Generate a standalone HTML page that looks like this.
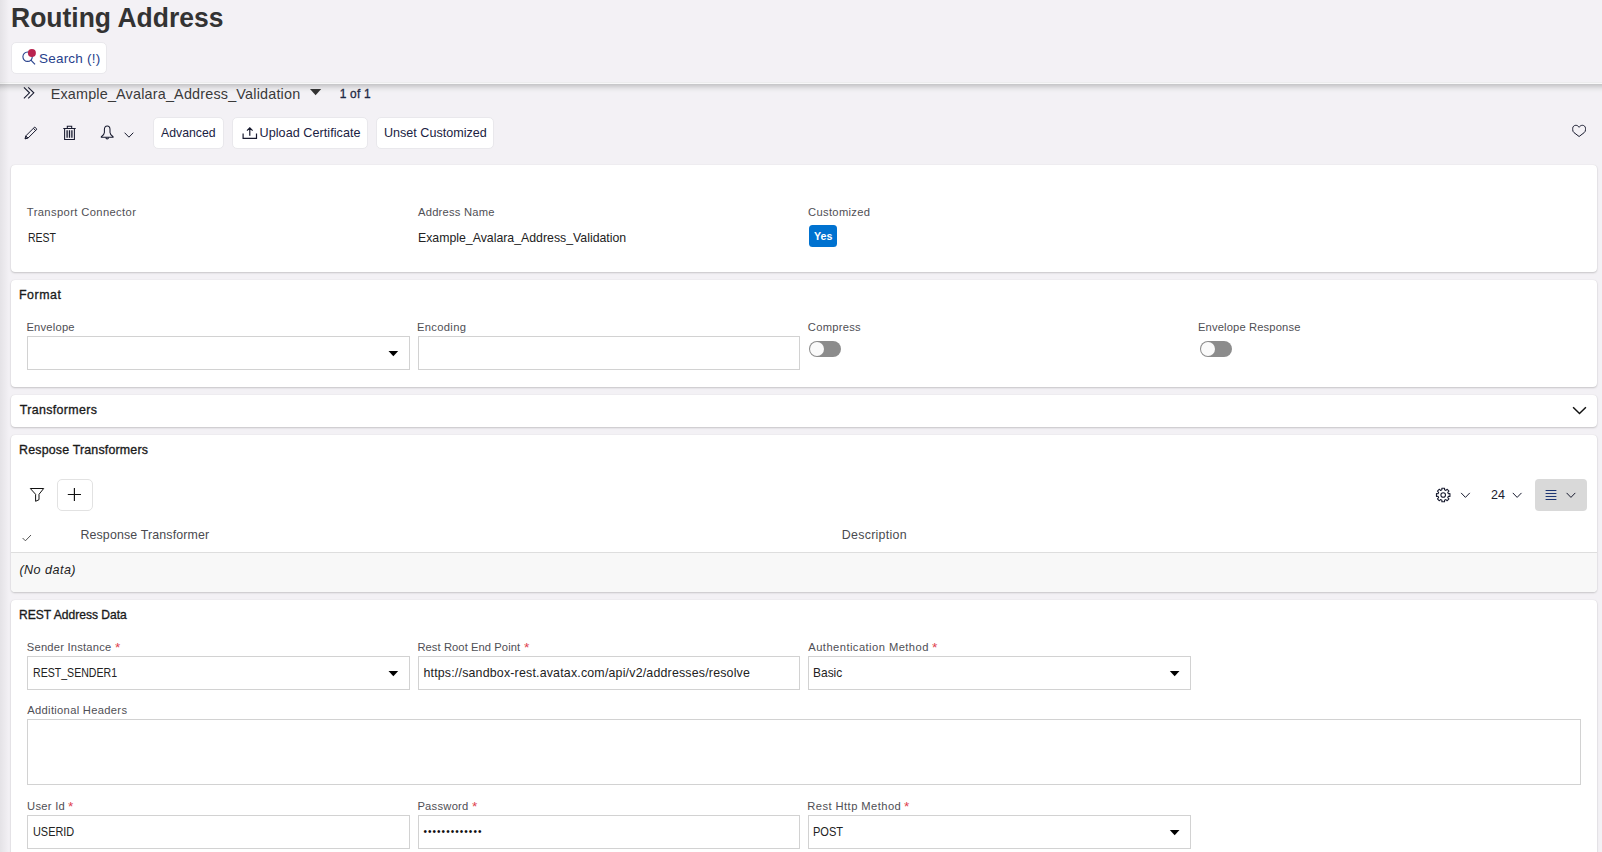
<!DOCTYPE html>
<html lang="en">
<head>
<meta charset="utf-8">
<title>Routing Address</title>
<style>
*{box-sizing:border-box;margin:0;padding:0}
html,body{width:1602px;height:852px;overflow:hidden}
body{background:#f3f1f5;font-family:"Liberation Sans",sans-serif;position:relative;color:#222}
.abs{position:absolute}
.t{position:absolute;white-space:nowrap;line-height:1;transform-origin:0 0;font-family:"Liberation Sans",sans-serif}
.edge{left:0;top:0;width:9px;height:852px;background:linear-gradient(to right,rgba(20,20,25,.065),rgba(20,20,25,.03) 55%,rgba(20,20,25,0))}
.hdr{left:0;top:0;width:1602px;height:84px;background:#f3f1f5;border-bottom:1px solid #f8f8f9}
.hdr:before{content:"";position:absolute;left:0;top:82px;width:100%;height:1px;background:#ececed}
.hshadow{left:0;top:84px;width:1602px;height:9px;background:linear-gradient(#c8c8ca 0 1px,#cfced1 1px 2px,#d6d5d8 2px 3px,#dddcdf 3px 4px,#e4e3e6 4px 5px,#e9e8eb 5px 6px,#edecef 6px 7px,#f0eff2 7px 8px,#f2f0f4 8px 9px)}
.btn{position:absolute;background:#fff;border:1px solid #e9e8ec;border-radius:5px}
.card{position:absolute;left:11px;width:1586px;background:#fff;border-radius:4px;box-shadow:0 1px 2px rgba(0,0,0,.18),0 0 1px rgba(0,0,0,.12)}
.inp{position:absolute;height:34px;width:382.5px;background:#fff;border:1px solid #d2d2d2}
.tog{position:absolute;width:32px;height:16px;border-radius:8px;background:#8c8c8c}
.tog i{position:absolute;left:1px;top:1px;width:14px;height:14px;border-radius:50%;background:#fafafa}
svg{position:absolute;overflow:visible;pointer-events:none}
.badge{position:absolute;background:#0072d0;border-radius:3.5px}
</style>
</head>
<body>

<div class="abs hshadow"></div>
<!-- record selector + toolbar (below sticky header) -->

<header class="abs hdr"></header>
<div class="abs edge"></div>
<div class="btn" style="left:11px;top:42px;width:96px;height:32px"></div>

<!-- toolbar icons -->
<div class="btn" style="left:153px;top:117px;width:71px;height:32px"></div>
<div class="btn" style="left:232px;top:117px;width:136px;height:32px"></div>
<div class="btn" style="left:376px;top:117px;width:118px;height:32px"></div>

<!-- card 1 -->
<section class="card" style="top:165px;height:106.7px"></section>
<div class="badge" style="left:809px;top:225px;width:28px;height:22px"></div>

<!-- card 2: Format -->
<section class="card" style="top:280px;height:106.8px"></section>
<div class="inp" style="left:27.2px;top:336px"></div>
<div class="inp" style="left:418.1px;top:336px;width:381.8px"></div>
<div class="tog" style="left:809px;top:341px"><i></i></div>
<div class="tog" style="left:1199.6px;top:341px"><i></i></div>

<!-- card 3: Transformers -->
<section class="card" style="top:394.8px;height:32.2px"></section>

<!-- card 4: Respose Transformers -->
<section class="card" style="top:435px;height:156.8px;overflow:hidden">
  <div class="abs" style="left:0;top:117.3px;width:1586px;height:1px;background:#dedede"></div>
  <div class="abs" style="left:0;top:118.3px;width:1586px;height:40px;background:#f8f8f8"></div>
</section>
<div class="btn" style="left:57px;top:479px;width:36px;height:32px;border-color:#e2e2e2"></div>
<div class="abs" style="left:1535px;top:479px;width:52px;height:31.600px;background:#d9d9d9;border-radius:4px"></div>

<!-- card 5: REST Address Data -->
<section class="card" style="top:600px;height:270px"></section>
<div class="inp" style="left:27.2px;top:656px"></div>
<div class="inp" style="left:418.1px;top:656px;width:381.8px"></div>
<div class="inp" style="left:808.2px;top:656px"></div>
<div class="inp" style="left:27.2px;top:719px;width:1553.6px;height:66px"></div>
<div class="inp" style="left:27.2px;top:815.2px"></div>
<div class="inp" style="left:418.1px;top:815.2px;width:381.8px"></div>
<div class="inp" style="left:808.2px;top:815.2px"></div>

<!-- icon overlay (all vector icons, page coordinates) -->
<svg class="icons" width="1602" height="852" viewBox="0 0 1602 852" style="left:0;top:0">
<path d="M23.900 87.400 29.500 92.850 23.900 98.300M28.200 87.400 33.800 92.850 28.200 98.300" fill="none" stroke="#171a2e" stroke-width="1.100"/>
<path d="M310 89H321.200L315.600 95.200Z" fill="#333"/>
<g fill="none"><circle cx="27.600" cy="56.700" r="4.700" stroke="#27418c" stroke-width="1.100"/><path d="M30.900 60.200 35 64.300" stroke="#27418c" stroke-width="1.200"/><circle cx="31.900" cy="52.900" r="4" fill="#b9234f"/></g>
<g transform="translate(24 126)" fill="none" stroke="#171a2e" stroke-width="1" stroke-linejoin="round"><path d="M10.700 1 12.900 3.200 4 12.100 1 12.900 1.800 9.900Z"/><path d="M9.500 2.400 11.600 4.500M1.800 9.900 4 12.100"/><path d="M1 12.900 1.600 10.600 3.300 12.300Z" fill="#171a2e" stroke="none"/></g>
<g transform="translate(63 125.5)" fill="none" stroke="#171a2e" stroke-width="1.050"><path d="M.3 2.900H12.700M4.300 2.700V.8H8.700V2.700M1.600 3V14H11.400V3"/><path d="M4.100 4.800V12.300M6.500 4.800V12.300M8.900 4.800V12.300" stroke-width="1.300"/></g>
<g transform="translate(100.2 125.3)" fill="none" stroke="#171a2e" stroke-width="1.050" stroke-linejoin="round"><path d="M7 .7C5.100.7 4.200 2.200 4.200 4.200V7.300C4.200 9.200 3 10.200 1.100 11.400V12H12.900V11.400C11 10.200 9.800 9.200 9.800 7.300V4.200C9.800 2.200 8.900.7 7 .7Z"/><path d="M5.700 12.300C5.700 14.100 8.300 14.100 8.300 12.300"/></g>
<g transform="translate(124.6 132.7)"><path d="M0 0 4.350 4.500 8.700 0" fill="none" stroke="#171a2e" stroke-width="1"/></g>
<g transform="translate(242.5 127)" fill="none" stroke="#171a2e" stroke-width="1.2"><path d="M.6 6.500V11.300H14V6.500M7.300 8.800V1M4.500 3.700 7.300.900 10.100 3.700"/></g>
<g transform="translate(1572.1 124.7)" fill="none" stroke="#171a2e" stroke-width="1" stroke-linejoin="round"><path d="M7 11.800 1.900 7.900C1 7.200.6 6.200.6 4.900V3.700C.6 1.900 2 .6 3.700.6 5.100.6 6.300 1.400 7 2.600 7.700 1.400 8.900.6 10.300.6 12 .6 13.400 1.900 13.400 3.700V4.900C13.400 6.200 13 7.200 12.100 7.900Z"/></g>
<g transform="translate(1572.5 406.5)" fill="none" stroke="#111" stroke-width="1.5"><path d="M.6.7 7 7 13.4.7"/></g>
<path d="M30.300 488.500H43.700L39 494.300V499.700L35.600 501.300V494.300Z" fill="none" stroke="#111" stroke-width="1" stroke-linejoin="round"/>
<path d="M74.400 488V501M67.800 494.500H81" fill="none" stroke="#111" stroke-width="1.150"/>
<g transform="translate(1435.9 487.7)" fill="none" stroke="#171a2e" stroke-width="1.050" stroke-linejoin="round"><circle cx="7.3" cy="7.3" r="2.300"/><path d="M6.02 2.16 L5.92 0.54 L8.68 0.54 L8.58 2.16 L10.03 2.76 L11.11 1.54 L13.06 3.49 L11.84 4.57 L12.44 6.02 L14.06 5.92 L14.06 8.68 L12.44 8.58 L11.84 10.03 L13.06 11.11 L11.11 13.06 L10.03 11.84 L8.58 12.44 L8.68 14.06 L5.92 14.06 L6.02 12.44 L4.57 11.84 L3.49 13.06 L1.54 11.11 L2.76 10.03 L2.16 8.58 L0.54 8.68 L0.54 5.92 L2.16 6.02 L2.76 4.57 L1.54 3.49 L3.49 1.54 L4.57 2.76Z"/></g>
<g transform="translate(1461.1 492.9)"><path d="M0 0 4.350 4.500 8.700 0" fill="none" stroke="#171a2e" stroke-width="1"/></g>
<g transform="translate(1512.8 492.9)"><path d="M0 0 4.350 4.500 8.700 0" fill="none" stroke="#171a2e" stroke-width="1"/></g>
<g transform="translate(1566.6 492.9)"><path d="M0 0 4.350 4.500 8.700 0" fill="none" stroke="#171a2e" stroke-width="1"/></g>
<path d="M1545.600 490.500H1556.400M1545.600 493.500H1556.400M1545.600 496.500H1556.400M1545.600 499.500H1556.400" fill="none" stroke="#1d3572" stroke-width="1"/>
<path d="M22.600 538 25.400 540.800 31 535" fill="none" stroke="#4a4a4a" stroke-width=".95"/>
<path d="M388.5 350.9h9.700l-4.850 5.300Z" fill="#000"/>
<path d="M388.5 671h9.700l-4.850 5.300Z" fill="#000"/>
<path d="M1169.8 671h9.700l-4.850 5.300Z" fill="#000"/>
<path d="M1169.8 830h9.700l-4.850 5.300Z" fill="#000"/>
</svg>
<h1 class="t" style="left:11.10px;top:4.00px;font-size:27.2px;color:#333;font-weight:700;transform:scaleX(0.9742);">Routing Address</h1>
<span class="t" style="left:39.00px;top:52.00px;font-size:13.5px;color:#27418c;font-weight:400;letter-spacing:0.211px;">Search (!)</span>
<span class="t" style="left:50.65px;top:87.00px;font-size:14.4px;color:#3a3a3a;font-weight:400;letter-spacing:0.183px;">Example_Avalara_Address_Validation</span>
<span class="t" style="left:339.85px;top:89.00px;font-size:11.9px;color:#1f2945;font-weight:400;letter-spacing:0.180px;-webkit-text-stroke:0.32px;">1 of 1</span>
<span class="t" style="left:161.30px;top:127.00px;font-size:12.6px;color:#1a2242;font-weight:400;transform:scaleX(0.9756);">Advanced</span>
<span class="t" style="left:259.50px;top:127.00px;font-size:12.6px;color:#1a2242;font-weight:400;letter-spacing:0.059px;">Upload Certificate</span>
<span class="t" style="left:384.00px;top:127.00px;font-size:12.6px;color:#1a2242;font-weight:400;transform:scaleX(0.9980);">Unset Customized</span>
<label class="t" style="left:26.85px;top:207.00px;font-size:11.2px;color:#4f4f55;font-weight:400;letter-spacing:0.381px;">Transport Connector</label>
<label class="t" style="left:418.00px;top:207.00px;font-size:11.2px;color:#4f4f55;font-weight:400;letter-spacing:0.227px;">Address Name</label>
<label class="t" style="left:808.00px;top:207.00px;font-size:11.2px;color:#4f4f55;font-weight:400;letter-spacing:0.333px;">Customized</label>
<span class="t" style="left:27.75px;top:232.00px;font-size:12.4px;color:#222;font-weight:400;transform:scaleX(0.8472);">REST</span>
<span class="t" style="left:418.01px;top:232.00px;font-size:12.4px;color:#222;font-weight:400;transform:scaleX(0.9930);">Example_Avalara_Address_Validation</span>
<span class="t" style="left:813.85px;top:231.00px;font-size:10.9px;color:#fff;font-weight:700;transform:scaleX(0.9808);">Yes</span>
<h2 class="t" style="left:18.95px;top:289.00px;font-size:12.4px;color:#1a1a1a;font-weight:400;letter-spacing:0.560px;-webkit-text-stroke:0.32px;">Format</h2>
<label class="t" style="left:26.40px;top:322.00px;font-size:11.2px;color:#4f4f55;font-weight:400;letter-spacing:0.221px;">Envelope</label>
<label class="t" style="left:416.90px;top:322.00px;font-size:11.2px;color:#4f4f55;font-weight:400;letter-spacing:0.343px;">Encoding</label>
<label class="t" style="left:807.80px;top:322.00px;font-size:11.2px;color:#4f4f55;font-weight:400;letter-spacing:0.271px;">Compress</label>
<label class="t" style="left:1198.00px;top:322.00px;font-size:11.2px;color:#4f4f55;font-weight:400;letter-spacing:0.141px;">Envelope Response</label>
<h2 class="t" style="left:19.80px;top:404.00px;font-size:12.4px;color:#1a1a1a;font-weight:400;letter-spacing:0.355px;-webkit-text-stroke:0.32px;">Transformers</h2>
<h2 class="t" style="left:19.05px;top:444.00px;font-size:12.4px;color:#1a1a1a;font-weight:400;letter-spacing:0.187px;-webkit-text-stroke:0.32px;">Respose Transformers</h2>
<span class="t" style="left:1491.20px;top:489.00px;font-size:12.6px;color:#1c2030;font-weight:400;transform:scaleX(0.9962);">24</span>
<span class="t" style="left:80.40px;top:529.00px;font-size:12.4px;color:#4a4a4f;font-weight:400;letter-spacing:0.145px;">Response Transformer</span>
<span class="t" style="left:841.80px;top:529.00px;font-size:12.4px;color:#4a4a4f;font-weight:400;letter-spacing:0.275px;">Description</span>
<span class="t" style="left:19.40px;top:564.00px;font-size:12.6px;color:#222;font-weight:400;letter-spacing:0.456px;font-style:italic;">(No data)</span>
<h2 class="t" style="left:18.77px;top:609.00px;font-size:12.4px;color:#1a1a1a;font-weight:400;transform:scaleX(0.9745);-webkit-text-stroke:0.32px;">REST Address Data</h2>
<label class="t" style="left:26.80px;top:642.00px;font-size:11.2px;color:#4f4f55;font-weight:400;letter-spacing:0.207px;">Sender Instance</label>
<span class="t" style="left:114.64px;top:641.30px;font-size:13px;color:#e0434f;font-weight:400;transform:scaleX(1.0444);">*</span>
<label class="t" style="left:417.40px;top:642.00px;font-size:11.2px;color:#4f4f55;font-weight:400;letter-spacing:0.075px;">Rest Root End Point</label>
<span class="t" style="left:524.33px;top:641.30px;font-size:13px;color:#e0434f;font-weight:400;transform:scaleX(1.0667);">*</span>
<label class="t" style="left:808.30px;top:642.00px;font-size:11.2px;color:#4f4f55;font-weight:400;letter-spacing:0.438px;">Authentication Method</label>
<span class="t" style="left:932.03px;top:641.30px;font-size:13px;color:#e0434f;font-weight:400;transform:scaleX(1.0667);">*</span>
<span class="t" style="left:33.25px;top:667.00px;font-size:12.4px;color:#222;font-weight:400;transform:scaleX(0.8537);">REST_SENDER1</span>
<span class="t" style="left:423.45px;top:667.00px;font-size:12.4px;color:#222;font-weight:400;letter-spacing:0.188px;">https://sandbox-rest.avatax.com/api/v2/addresses/resolve</span>
<span class="t" style="left:813.33px;top:667.00px;font-size:12.4px;color:#222;font-weight:400;transform:scaleX(0.9655);">Basic</span>
<label class="t" style="left:27.30px;top:705.00px;font-size:11.2px;color:#4f4f55;font-weight:400;letter-spacing:0.303px;">Additional Headers</label>
<label class="t" style="left:27.05px;top:801.00px;font-size:11.2px;color:#4f4f55;font-weight:400;letter-spacing:0.283px;">User Id</label>
<span class="t" style="left:68.04px;top:800.30px;font-size:13px;color:#e0434f;font-weight:400;transform:scaleX(1.0444);">*</span>
<label class="t" style="left:417.40px;top:801.00px;font-size:11.2px;color:#4f4f55;font-weight:400;letter-spacing:0.257px;">Password</label>
<span class="t" style="left:472.04px;top:800.30px;font-size:13px;color:#e0434f;font-weight:400;transform:scaleX(1.0444);">*</span>
<label class="t" style="left:807.30px;top:801.00px;font-size:11.2px;color:#4f4f55;font-weight:400;letter-spacing:0.430px;">Rest Http Method</label>
<span class="t" style="left:904.04px;top:800.30px;font-size:13px;color:#e0434f;font-weight:400;transform:scaleX(1.0444);">*</span>
<span class="t" style="left:33.32px;top:826.00px;font-size:12.4px;color:#222;font-weight:400;transform:scaleX(0.8796);">USERID</span>
<span class="t" style="left:423.40px;top:827.00px;font-size:10px;color:#111;font-weight:400;letter-spacing:1.046px;">•••••••••••••</span>
<span class="t" style="left:813.41px;top:826.00px;font-size:12.4px;color:#222;font-weight:400;transform:scaleX(0.8923);">POST</span>
</body>
</html>
